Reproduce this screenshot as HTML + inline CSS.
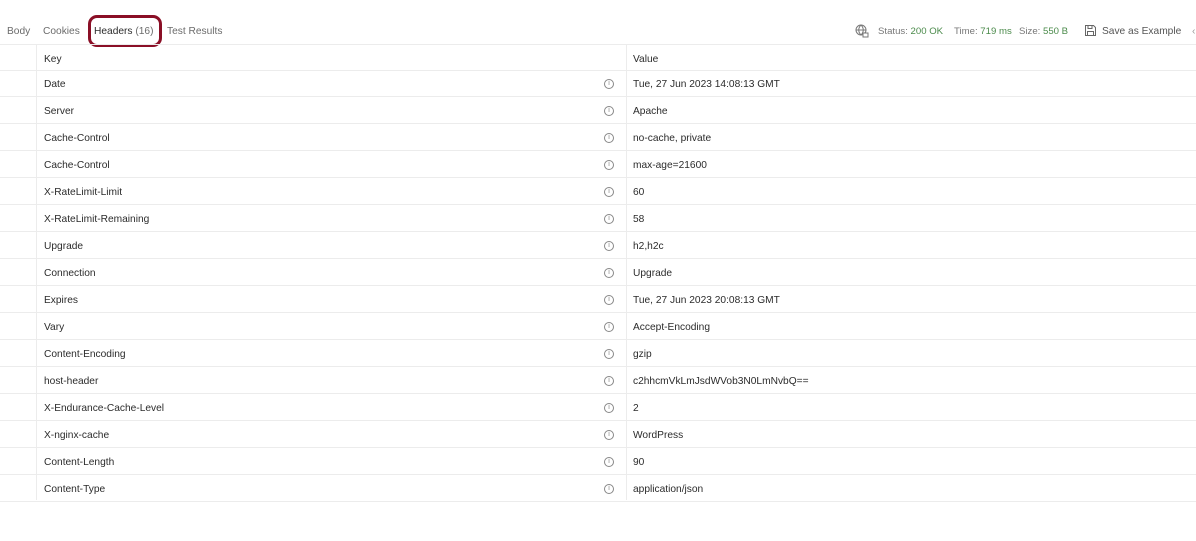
<!DOCTYPE html>
<html><head><style>
body{margin:0;width:1196px;height:541px;background:#fff;font-family:"Liberation Sans",sans-serif;font-size:10.2px;color:#2b2b2b;position:relative;overflow:hidden}
.t{position:absolute;top:26px;white-space:nowrap}
.g{color:#6b6b6b}
.row{position:absolute;left:0;width:1196px;height:26px;border-bottom:1px solid #ececec}
.row span{position:absolute;top:9px}
.k{left:44px}.v{left:633px}
.vl{position:absolute;top:44px;width:1px;height:456px;background:#ececec}
.i{position:absolute;left:604px;top:9px;width:8px;height:8px;border:1px solid #888;border-radius:50%;font-size:7px;line-height:8px;text-align:center;color:#888;font-style:normal}
.s{font-size:9.6px;color:#777}
.s b{font-weight:normal;color:#4a8a4a}
</style></head><body>
<div class="t g" style="left:7px">Body</div>
<div class="t g" style="left:43px">Cookies</div>
<div class="t" style="left:94px">Headers <span class="g">(16)</span></div>
<div class="t g" style="left:167px">Test Results</div>
<div style="position:absolute;left:88px;top:15px;width:68px;height:26px;border:3px solid #8a0f26;border-radius:9px"></div>
<svg style="position:absolute;left:855px;top:24px" width="14" height="14" viewBox="0 0 14 14" fill="none" stroke="#777" stroke-width="1"><circle cx="6" cy="6" r="5"/><path d="M1 6h10M6 1c-3 3-3 7 0 10M6 1c3 3 3 7 0 10"/><rect x="8" y="9" width="5" height="4" fill="#fff"/></svg>
<div class="t s" style="left:878px">Status: <b>200 OK</b></div>
<div class="t s" style="left:954px">Time: <b>719 ms</b></div>
<div class="t s" style="left:1019px">Size: <b>550 B</b></div>
<svg style="position:absolute;left:1084px;top:24px" width="13" height="13" viewBox="0 0 13 13" fill="none" stroke="#666"><path d="M1.5 1.5h8l2 2v8h-10z M4 1.5v3h4v-3 M3.5 11.5v-4h6v4"/></svg>
<div class="t" style="left:1102px;color:#555">Save as Example</div>
<div class="t" style="left:1192px;color:#999">‹</div>
<div class="row" style="top:44px;border-top:1px solid #ececec;height:25px"><span class="k">Key</span><span class="v">Value</span></div>
<div class="vl" style="left:36px"></div><div class="vl" style="left:626px"></div>
<div class="row" style="top:70px"><span class="k">Date</span><i class="i">i</i><span class="v">Tue, 27 Jun 2023 14:08:13 GMT</span></div>
<div class="row" style="top:97px"><span class="k">Server</span><i class="i">i</i><span class="v">Apache</span></div>
<div class="row" style="top:124px"><span class="k">Cache-Control</span><i class="i">i</i><span class="v">no-cache, private</span></div>
<div class="row" style="top:151px"><span class="k">Cache-Control</span><i class="i">i</i><span class="v">max-age=21600</span></div>
<div class="row" style="top:178px"><span class="k">X-RateLimit-Limit</span><i class="i">i</i><span class="v">60</span></div>
<div class="row" style="top:205px"><span class="k">X-RateLimit-Remaining</span><i class="i">i</i><span class="v">58</span></div>
<div class="row" style="top:232px"><span class="k">Upgrade</span><i class="i">i</i><span class="v">h2,h2c</span></div>
<div class="row" style="top:259px"><span class="k">Connection</span><i class="i">i</i><span class="v">Upgrade</span></div>
<div class="row" style="top:286px"><span class="k">Expires</span><i class="i">i</i><span class="v">Tue, 27 Jun 2023 20:08:13 GMT</span></div>
<div class="row" style="top:313px"><span class="k">Vary</span><i class="i">i</i><span class="v">Accept-Encoding</span></div>
<div class="row" style="top:340px"><span class="k">Content-Encoding</span><i class="i">i</i><span class="v">gzip</span></div>
<div class="row" style="top:367px"><span class="k">host-header</span><i class="i">i</i><span class="v">c2hhcmVkLmJsdWVob3N0LmNvbQ==</span></div>
<div class="row" style="top:394px"><span class="k">X-Endurance-Cache-Level</span><i class="i">i</i><span class="v">2</span></div>
<div class="row" style="top:421px"><span class="k">X-nginx-cache</span><i class="i">i</i><span class="v">WordPress</span></div>
<div class="row" style="top:448px"><span class="k">Content-Length</span><i class="i">i</i><span class="v">90</span></div>
<div class="row" style="top:475px"><span class="k">Content-Type</span><i class="i">i</i><span class="v">application/json</span></div>
</body></html>
